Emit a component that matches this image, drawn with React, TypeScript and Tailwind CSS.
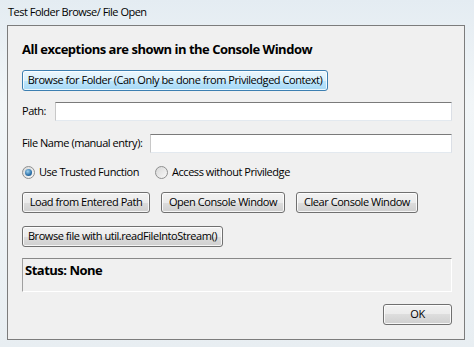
import React from "react";

const font = { fontFamily: '"Open Sans", "Noto Sans", sans-serif' };

function Btn({ children, w, primary }: { children: React.ReactNode; w: string; primary?: boolean }) {
  return (
    <div
      className={`${w} h-[21px] rounded-[3px] border flex items-center justify-center text-[11px] text-black whitespace-nowrap shadow-[inset_0_0_0_1px_rgba(255,255,255,0.8)] ${
        primary
          ? "border-[#3c7fb1] bg-[linear-gradient(#eaf6fd_0%,#d9f0fc_50%,#bee6fd_50%,#a7d9f5_100%)]"
          : "border-[#707070] bg-[linear-gradient(#f2f2f2_0%,#ebebeb_50%,#dddddd_50%,#cfcfcf_100%)]"
      }`}
    >
      <span className="tracking-[-0.45px]">{children}</span>
    </div>
  );
}

function Radio({ checked }: { checked?: boolean }) {
  return (
    <div className="w-[13px] h-[13px] rounded-full border border-[#8e8f8f] bg-[linear-gradient(135deg,#d8d8d8,#f8f8f8)] flex items-center justify-center">
      {checked && (
        <div className="w-[7px] h-[7px] rounded-full bg-[radial-gradient(circle_at_40%_35%,#9fd2ef,#2a6fa8_60%,#1b4d7c)]" />
      )}
    </div>
  );
}

function Input({ w }: { w: string }) {
  return <div className={`${w} h-[19px] bg-white border border-[#e3e9ef] border-t-[#7a7a7a] border-l-[#c8c8c8] border-r-[#dbdfe6]`} />;
}

export default function App() {
  return (
    <div
      className="w-[474px] h-[347px] flex flex-col bg-[linear-gradient(180deg,#e4ecf2_0%,#f2f6f8_30%,#e8eef2_100%)] text-black"
      style={font}
    >
      <div className="h-[25px] flex items-center pl-[8px] text-[11px] tracking-[-0.5px]">Test Folder Browse/ File Open</div>
      <div className="ml-[7px] mr-[9px] mb-[7px] flex-1 border border-[#7c7c7c] bg-[#f0f0f0] flex flex-col pl-[14px] pr-[12px] text-[11px] tracking-[-0.45px]">
        <div className="mt-[15px] h-[18px] flex items-center text-[13px] font-bold tracking-[-0.5px] whitespace-nowrap">
          All exceptions are shown in the Console Window
        </div>
        <div className="mt-[11px]">
          <Btn w="w-[306px]" primary>
            Browse for Folder (Can Only be done from Priviledged Context)
          </Btn>
        </div>
        <div className="mt-[11px] flex items-center">
          <span className="w-[33px]">Path:</span>
          <Input w="flex-1" />
        </div>
        <div className="mt-[13px] flex items-center">
          <span className="w-[128px] whitespace-nowrap">File Name (manual entry):</span>
          <Input w="flex-1" />
        </div>
        <div className="mt-[11px] h-[16px] flex items-center whitespace-nowrap">
          <Radio checked />
          <span className="ml-[4px] w-[116px]">Use Trusted Function</span>
          <Radio />
          <span className="ml-[4px]">Access without Priviledge</span>
        </div>
        <div className="mt-[12px] flex gap-[11px]">
          <Btn w="w-[128px]">Load from Entered Path</Btn>
          <Btn w="w-[124px]">Open Console Window</Btn>
          <Btn w="w-[122px]">Clear Console Window</Btn>
        </div>
        <div className="mt-[13px]">
          <Btn w="w-[201px]">Browse file with util.readFileIntoStream()</Btn>
        </div>
        <div className="mt-[11px] h-[34px] border border-[#a0a0a0] border-b-white border-r-white border-t-[#888] flex items-start pl-[2px] pt-[2px]">
          <span className="text-[13px] font-bold leading-[18px] tracking-[-0.5px]">Status: None</span>
        </div>
        <div className="mt-[12px] flex justify-end">
          <Btn w="w-[69px]">OK</Btn>
        </div>
      </div>
    </div>
  );
}
